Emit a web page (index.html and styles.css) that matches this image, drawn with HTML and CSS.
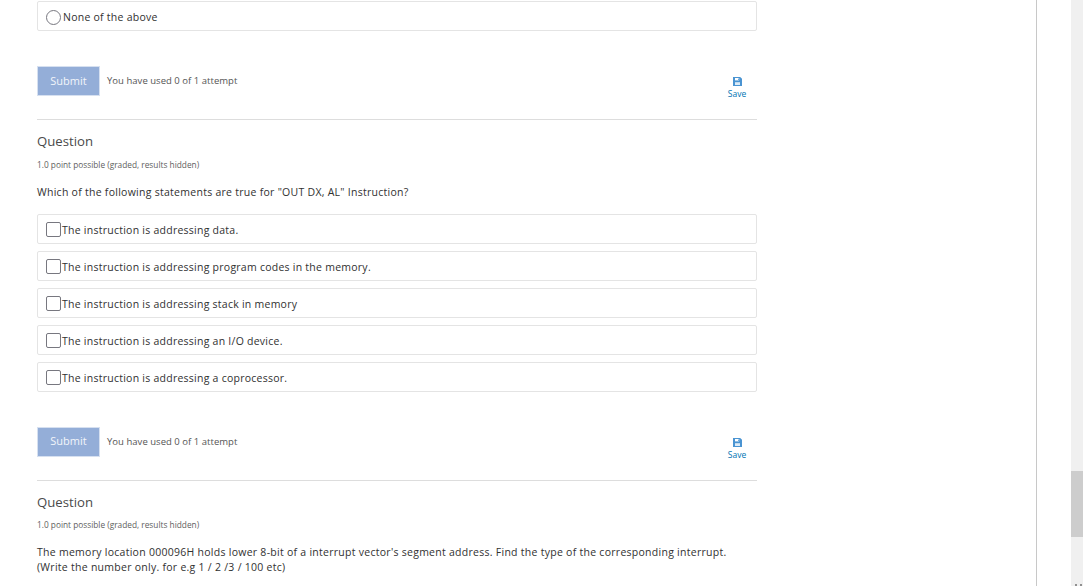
FILE: index.html
```html
<!DOCTYPE html>
<html lang="en">
<head>
  <meta charset="UTF-8" />
  <meta name="viewport" content="width=device-width, initial-scale=1" />
  <title>Problem</title>
  <link rel="stylesheet" href="styles.css">
</head>
<body>
  <div class="page">
    <div class="content">
      <div class="problem">
        <div class="choices">
          <label class="choice"><span class="radio"></span>None of the above</label>
        </div>
        <div class="actions">
          <button class="submit-btn" type="button">Submit</button>
          <span class="attempts">You have used 0 of 1 attempt</span>
          <a class="save-link">
            <svg class="save-icon" width="9" height="9" viewBox="0 0 9 9"><path d="M0 0h7.2L9 1.8V9H0z" fill="#4a94d2"/><path d="M2 1h4.2v2.4H2z" fill="#fff"/><path d="M5 1.4h.8v1.6H5z" fill="#4a94d2"/><path d="M2 5.2h5V8H2z" fill="#dcebf7"/></svg>
            Save
          </a>
        </div>
      </div>

      <div class="problem">
        <h3 class="problem-title">Question</h3>
        <div class="points">1.0 point possible (graded, results hidden)</div>
        <p class="prompt">Which of the following statements are true for "OUT DX, AL" Instruction?</p>
        <div class="choices">
          <label class="choice"><span class="checkbox"></span>The instruction is addressing data.</label>
          <label class="choice"><span class="checkbox"></span>The instruction is addressing program codes in the memory.</label>
          <label class="choice"><span class="checkbox"></span>The instruction is addressing stack in memory</label>
          <label class="choice"><span class="checkbox"></span>The instruction is addressing an I/O device.</label>
          <label class="choice"><span class="checkbox"></span>The instruction is addressing a coprocessor.</label>
        </div>
        <div class="actions">
          <button class="submit-btn" type="button">Submit</button>
          <span class="attempts">You have used 0 of 1 attempt</span>
          <a class="save-link">
            <svg class="save-icon" width="9" height="9" viewBox="0 0 9 9"><path d="M0 0h7.2L9 1.8V9H0z" fill="#4a94d2"/><path d="M2 1h4.2v2.4H2z" fill="#fff"/><path d="M5 1.4h.8v1.6H5z" fill="#4a94d2"/><path d="M2 5.2h5V8H2z" fill="#dcebf7"/></svg>
            Save
          </a>
        </div>
      </div>

      <div class="problem">
        <h3 class="problem-title">Question</h3>
        <div class="points">1.0 point possible (graded, results hidden)</div>
        <p class="prompt">The memory location 000096H holds lower 8-bit of a interrupt vector's segment address. Find the type of the corresponding interrupt.<br>(Write the number only. for e.g 1 / 2 /3 / 100 etc)</p>
      </div>
    </div>
    <div class="gutter"></div>
    <div class="scrollbar">
      <div class="scroll-thumb"></div>
      <svg class="scroll-arrow" width="12" height="2" viewBox="0 0 12 2"><path d="M4 0h2v2H4zM9 0h2v2H9z" fill="#909090"/></svg>
    </div>
  </div>
</body>
</html>
```

FILE: styles.css
```css
html, body {
  margin: 0;
  padding: 0;
  height: 586px;
  overflow: hidden;
  background: #fff;
}
body {
  font-family: 'Open Sans', 'Liberation Sans', sans-serif;
  color: #313131;
}
.page {
  display: flex;
  height: 586px;
}
.content {
  width: 1037px;
  box-sizing: border-box;
  padding: 1px 279px 0 37px;
  border-right: 1px solid #c8c8c8;
  flex-shrink: 0;
}
.gutter {
  flex: 1;
}
.scrollbar {
  width: 12px;
  background: #f0f0f0;
  padding-top: 471px;
  box-sizing: border-box;
  display: flex;
  flex-direction: column;
}
.scroll-thumb {
  height: 66px;
  background: #cdcdcd;
}
.scroll-arrow {
  margin-top: auto;
}
.problem {
  border-bottom: 1px solid #ddd;
  margin-bottom: 11px;
}
.problem:last-of-type {
  border-bottom: none;
  margin-bottom: 0;
}
.choices {
  display: flex;
  flex-direction: column;
  gap: 7px;
}
.choice {
  display: flex;
  align-items: center;
  height: 30px;
  box-sizing: border-box;
  border: 1px solid #e4e4e4;
  border-radius: 2px;
  padding: 2px 0 0 8px;
  font-size: 10.5px;
  letter-spacing: 0.25px;
  line-height: 16px;
  color: #313131;
}
.radio {
  width: 15px;
  height: 15px;
  box-sizing: border-box;
  border: 1px solid #77777f;
  border-radius: 50%;
  margin-right: 2px;
}
.checkbox {
  width: 15px;
  height: 15px;
  box-sizing: border-box;
  border: 1px solid #77777f;
  border-radius: 2px;
  margin-right: 1px;
}
.actions {
  display: flex;
  align-items: flex-start;
  margin-top: 35px;
  padding-bottom: 20px;
}
.submit-btn {
  width: 63px;
  height: 30px;
  background: #94aed8;
  border: 1px solid #d6e0f0;
  color: #f2f5fa;
  font-family: inherit;
  font-size: 11px;
  padding: 0 0 2px 0;
}
.attempts {
  margin-left: 7px;
  margin-top: 8px;
  font-size: 9.5px;
  letter-spacing: 0.03px;
  line-height: 13px;
  color: #555;
}
.save-link {
  margin-left: auto;
  width: 40px;
  margin-top: 11px;
  display: flex;
  flex-direction: column;
  align-items: center;
  font-size: 8.5px;
  line-height: 11px;
  color: #0075b4;
}
.save-icon {
  margin-bottom: 2px;
}
.problem-title {
  margin: 0;
  font-size: 13.2px;
  font-weight: 400;
  line-height: 20px;
  color: #4a4a4a;
}
.points {
  margin-top: 7.5px;
  font-size: 8.3px;
  line-height: 12px;
  color: #5e5e5e;
}
.prompt {
  margin: 14px 0 14px 0;
  font-size: 10.5px;
  letter-spacing: 0.27px;
  line-height: 15px;
  color: #313131;
}
```
